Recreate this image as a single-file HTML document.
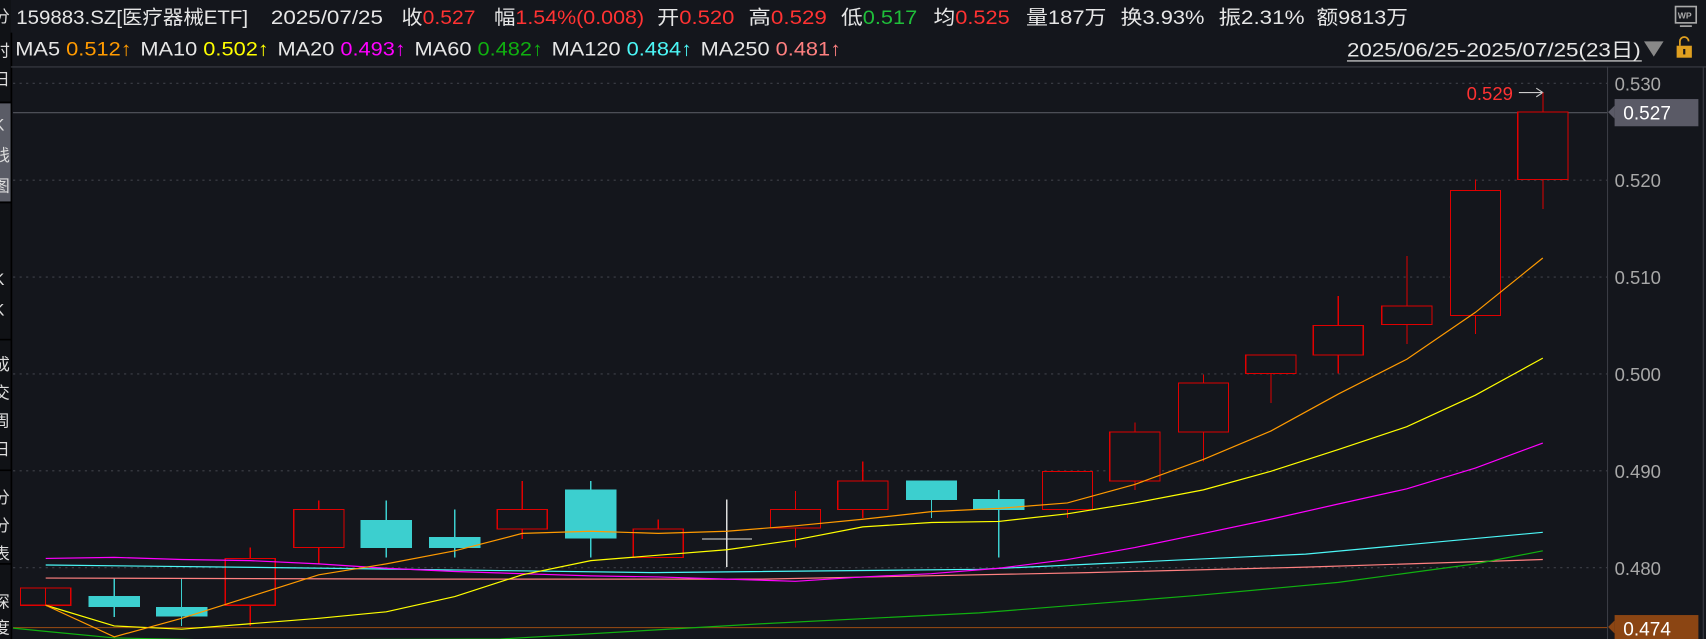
<!DOCTYPE html>
<html><head><meta charset="utf-8"><style>
html,body{margin:0;padding:0;background:#14161c;overflow:hidden}
svg{display:block}
text{font-family:"Liberation Sans","Noto Sans CJK SC",sans-serif}
</style></head><body>
<svg width="1706" height="639" viewBox="0 0 1568 587" preserveAspectRatio="none" xmlns="http://www.w3.org/2000/svg">
<rect width="1568" height="587" fill="#14161c"/>
<!-- left strip -->
<rect x="0" y="0" width="10" height="587" fill="#101216"/>
<rect x="0" y="95" width="10" height="90" fill="#5a5c66"/>
<line x1="10.5" y1="30" x2="10.5" y2="587" stroke="#000" stroke-width="1.5"/>
<g stroke="#000" stroke-width="1.5"><line x1="0" y1="94" x2="10" y2="94"/><line x1="0" y1="186" x2="10" y2="186"/><line x1="0" y1="312" x2="10" y2="312"/><line x1="0" y1="432" x2="10" y2="432"/><line x1="0" y1="518" x2="10" y2="518"/></g>
<g fill="#ddd" font-size="15">
<text x="-6" y="20">分</text><text x="-6" y="52">时</text><text x="-6" y="78">日</text>
<text x="-6" y="120">K</text><text x="-6" y="148">线</text><text x="-6" y="176">图</text>
<text x="-6" y="262">K</text><text x="-6" y="290">K</text>
<text x="-6" y="340">成</text><text x="-6" y="366">交</text><text x="-6" y="392">周</text><text x="-6" y="418">日</text>
<text x="-6" y="462">分</text><text x="-6" y="488">分</text><text x="-6" y="514">表</text><text x="-6" y="558">深</text><text x="-6" y="582">度</text>
</g>
<!-- header -->
<g font-size="18" fill="#e6e6e6">
<text x="15" y="22" textLength="213" lengthAdjust="spacingAndGlyphs">159883.SZ[医疗器械ETF]</text>
<text x="249" y="22" textLength="103" lengthAdjust="spacingAndGlyphs">2025/07/25</text>
<text x="369" y="22" textLength="68" lengthAdjust="spacingAndGlyphs">收<tspan fill="#ff3232">0.527</tspan></text>
<text x="454" y="22" textLength="138" lengthAdjust="spacingAndGlyphs">幅<tspan fill="#ff3232">1.54%(0.008)</tspan></text>
<text x="604" y="22" textLength="71" lengthAdjust="spacingAndGlyphs">开<tspan fill="#ff3232">0.520</tspan></text>
<text x="688" y="22" textLength="72" lengthAdjust="spacingAndGlyphs">高<tspan fill="#ff3232">0.529</tspan></text>
<text x="773" y="22" textLength="70" lengthAdjust="spacingAndGlyphs">低<tspan fill="#1fbf3a">0.517</tspan></text>
<text x="858" y="22" textLength="70" lengthAdjust="spacingAndGlyphs">均<tspan fill="#ff3232">0.525</tspan></text>
<text x="943" y="22" textLength="74" lengthAdjust="spacingAndGlyphs">量187万</text>
<text x="1030" y="22" textLength="77" lengthAdjust="spacingAndGlyphs">换3.93%</text>
<text x="1120" y="22" textLength="79" lengthAdjust="spacingAndGlyphs">振2.31%</text>
<text x="1210" y="22" textLength="84" lengthAdjust="spacingAndGlyphs">额9813万</text>
<text x="14" y="51" textLength="107" lengthAdjust="spacingAndGlyphs">MA5 <tspan fill="#ff9a00">0.512↑</tspan></text>
<text x="129" y="51" textLength="118" lengthAdjust="spacingAndGlyphs">MA10 <tspan fill="#ffff00">0.502↑</tspan></text>
<text x="255" y="51" textLength="118" lengthAdjust="spacingAndGlyphs">MA20 <tspan fill="#ff00ff">0.493↑</tspan></text>
<text x="381" y="51" textLength="118" lengthAdjust="spacingAndGlyphs">MA60 <tspan fill="#10b010">0.482↑</tspan></text>
<text x="507" y="51" textLength="129" lengthAdjust="spacingAndGlyphs">MA120 <tspan fill="#4cf7f7">0.484↑</tspan></text>
<text x="644" y="51" textLength="129" lengthAdjust="spacingAndGlyphs">MA250 <tspan fill="#ff8080">0.481↑</tspan></text>
<text x="1238" y="52" textLength="270" lengthAdjust="spacingAndGlyphs">2025/06/25-2025/07/25(23日)</text>
</g>
<line x1="1238" y1="56" x2="1509" y2="56" stroke="#e6e6e6" stroke-width="1"/>
<polygon points="1511,38 1529,38 1520,52" fill="#888"/>
<!-- lock -->
<rect x="1541" y="42" width="14" height="11" fill="#e0a020"/>
<path d="M1544,42 v-4 a4,4 0 0 1 8,0" fill="none" stroke="#e0a020" stroke-width="1.6"/>
<rect x="1547" y="45" width="2" height="5" fill="#14161c"/>
<!-- WP icon -->
<rect x="1540" y="6" width="19" height="15" fill="none" stroke="#aaa" stroke-width="1.5"/>
<text x="1542" y="17" font-size="8" fill="#aaa" font-weight="bold">WP</text>
<line x1="1544" y1="24" x2="1555" y2="24" stroke="#aaa" stroke-width="1.5"/>
<!-- separators -->
<line x1="10" y1="61.5" x2="1568" y2="61.5" stroke="#3a3c44" stroke-width="1"/>
<line x1="1477.5" y1="61" x2="1477.5" y2="587" stroke="#3a3c44" stroke-width="1"/>
<line x1="1565.5" y1="61" x2="1565.5" y2="587" stroke="#3a3c44" stroke-width="1"/>
<!-- grid -->
<g stroke="#3e4048" stroke-width="1" stroke-dasharray="2,4">
<line x1="12" y1="76.5" x2="1477" y2="76.5"/><line x1="12" y1="165.5" x2="1477" y2="165.5"/><line x1="12" y1="254.5" x2="1477" y2="254.5"/><line x1="12" y1="343.5" x2="1477" y2="343.5"/><line x1="12" y1="432.5" x2="1477" y2="432.5"/><line x1="12" y1="521.5" x2="1477" y2="521.5"/>
</g>
<g font-size="17" fill="#a8a8a8">
<text x="1484" y="83">0.530</text><text x="1484" y="172">0.520</text><text x="1484" y="261">0.510</text><text x="1484" y="350">0.500</text><text x="1484" y="439">0.490</text><text x="1484" y="528">0.480</text>
</g>
<line x1="12" y1="103.5" x2="1477" y2="103.5" stroke="#55575f" stroke-width="1"/>
<polygon points="1478,103 1484,97 1484,109" fill="#5a5a66"/>
<rect x="1484" y="91" width="77" height="25" fill="#5a5a66"/>
<text x="1492" y="110" font-size="17.5" fill="#fff">0.527</text>
<line x1="12" y1="576.5" x2="1477" y2="576.5" stroke="#8b4513" stroke-width="1"/>
<polygon points="1478,576 1484,570 1484,582" fill="#8b4513"/>
<rect x="1484" y="565" width="77" height="22" fill="#8b4513"/>
<text x="1492" y="584" font-size="17.5" fill="#fff">0.474</text>
<text x="1348" y="92" font-size="17" fill="#ff3232">0.529</text>
<path d="M1396,85 H1418 M1412,81 L1418,85 L1412,89" fill="none" stroke="#ccc" stroke-width="1"/>
<!-- candles -->
<g stroke-width="1" shape-rendering="crispEdges">
<g stroke="#e00000" fill="none">
<line x1="42" y1="540" x2="42" y2="556"/><rect x="19" y="540" width="46" height="16"/>
<line x1="230" y1="503" x2="230" y2="575"/><rect x="207" y="513" width="46" height="43" fill="#14161c"/>
<line x1="293" y1="460" x2="293" y2="518"/><rect x="270" y="468" width="46" height="35" fill="#14161c"/>
<line x1="480" y1="442" x2="480" y2="495"/><rect x="457" y="468" width="46" height="18" fill="#14161c"/>
<line x1="605" y1="477" x2="605" y2="512"/><rect x="582" y="486" width="46" height="26" fill="#14161c"/>
<line x1="731" y1="451" x2="731" y2="503"/><rect x="708" y="468" width="46" height="17" fill="#14161c"/>
<line x1="793" y1="424" x2="793" y2="476"/><rect x="770" y="442" width="46" height="26" fill="#14161c"/>
<line x1="981" y1="433" x2="981" y2="476"/><rect x="958" y="433" width="46" height="35" fill="#14161c"/>
<line x1="1043" y1="388" x2="1043" y2="450"/><rect x="1020" y="397" width="46" height="45" fill="#14161c"/>
<line x1="1106" y1="344" x2="1106" y2="424"/><rect x="1083" y="352" width="46" height="45" fill="#14161c"/>
<line x1="1168" y1="326" x2="1168" y2="370"/><rect x="1145" y="326" width="46" height="17" fill="#14161c"/>
<line x1="1230" y1="272" x2="1230" y2="343"/><rect x="1207" y="299" width="46" height="27" fill="#14161c"/>
<line x1="1293" y1="235" x2="1293" y2="316"/><rect x="1270" y="281" width="46" height="17" fill="#14161c"/>
<line x1="1356" y1="165" x2="1356" y2="307"/><rect x="1333" y="175" width="46" height="115" fill="#14161c"/>
<line x1="1418" y1="85" x2="1418" y2="192"/><rect x="1395" y="103" width="46" height="62" fill="#14161c"/>
</g>
<g stroke="#3ccfcf" fill="#3ccfcf">
<line x1="105" y1="531" x2="105" y2="567"/><rect x="82" y="548" width="46" height="9"/>
<line x1="167" y1="531" x2="167" y2="575"/><rect x="144" y="558" width="46" height="8"/>
<line x1="355" y1="460" x2="355" y2="512"/><rect x="332" y="478" width="46" height="25"/>
<line x1="418" y1="468" x2="418" y2="512"/><rect x="395" y="494" width="46" height="9"/>
<line x1="543" y1="442" x2="543" y2="512"/><rect x="520" y="450" width="46" height="44"/>
<line x1="856" y1="442" x2="856" y2="476"/><rect x="833" y="442" width="46" height="17"/>
<line x1="918" y1="450" x2="918" y2="512"/><rect x="895" y="459" width="46" height="9"/>
</g>
<g stroke="#ddd"><line x1="668" y1="459" x2="668" y2="521"/><line x1="645" y1="495" x2="691" y2="495"/></g>
</g>
<!-- MA lines -->
<g fill="none" stroke-width="1.1">
<polyline stroke="#ff8080" points="42,531 400,532 700,532 1000,526 1200,521 1418,514"/>
<polyline stroke="#4cf7f7" points="42,519 300,522 600,526 900,523 1200,509 1418,489"/>
<polyline stroke="#10b010" points="12,577 42,580 105,586 200,588 460,587 700,573 900,563 1100,547 1230,535 1356,518 1418,506"/>
<polyline stroke="#ff00ff" points="42,513 105,512 167,514 230,515 293,518 355,522 418,525 480,527 543,529 605,530 668,532 731,534 793,530 856,527 918,522 981,514 1043,503 1106,490 1168,477 1230,463 1293,449 1356,430 1418,407"/>
<polyline stroke="#ffff00" points="42,556 105,575 167,578 230,573 293,568 355,562 418,548 480,528 543,515 605,510 668,505 731,496 793,484 856,480 918,479 981,472 1043,462 1106,450 1168,433 1230,413 1293,392 1356,363 1418,329"/>
<polyline stroke="#ff9a00" points="42,556 105,585 167,568 230,548 293,528 355,518 418,506 480,490 543,488 605,490 668,488 731,483 793,477 856,470 918,467 981,462 1043,445 1106,422 1168,396 1230,362 1293,330 1356,287 1418,237"/>
</g>
</svg>
</body></html>
